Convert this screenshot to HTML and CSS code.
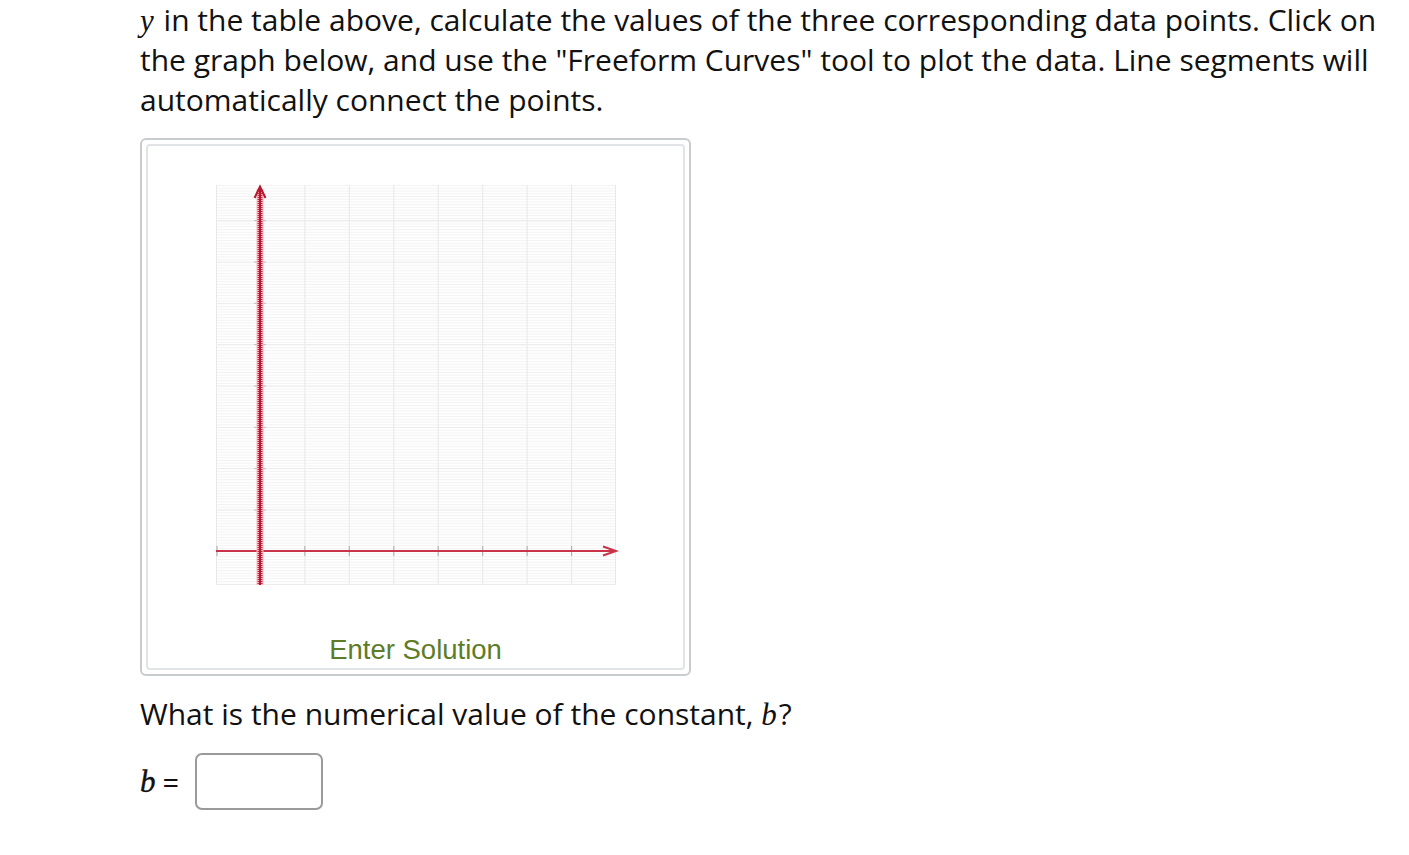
FILE: index.html
```html
<!DOCTYPE html>
<html>
<head>
<meta charset="utf-8">
<link rel="stylesheet" href="styles.css">
</head>
<body>
<div class="page">
  <p class="intro"><span class="math">y</span> in the table above, calculate the values of the three corresponding data points. Click on the graph below, and use the "Freeform Curves" tool to plot the data. Line segments will automatically connect the points.</p>

  <div class="graph-outer">
    <div class="graph-inner">
      <svg class="graph" width="400" height="400" viewBox="0 0 400 400">
        <defs>
          <pattern id="minor" width="400" height="2.75" patternUnits="userSpaceOnUse">
            <rect x="0" y="0" width="400" height="1" fill="#f2f2f2"/>
          </pattern>
          <pattern id="hatch" width="8" height="2" patternUnits="userSpaceOnUse">
            <rect x="0" y="0" width="8" height="1" fill="#c22a40"/>
          </pattern>
        </defs>
        <rect x="0" y="0" width="400" height="400" fill="#ffffff"/>
        <rect x="0" y="0" width="400" height="400" fill="url(#minor)"/>
        <g stroke="#e8e8e8" stroke-width="1">
          <line x1="0.5" y1="0" x2="0.5" y2="400"/>
          <line x1="88.9" y1="0" x2="88.9" y2="400"/>
          <line x1="133.3" y1="0" x2="133.3" y2="400"/>
          <line x1="177.8" y1="0" x2="177.8" y2="400"/>
          <line x1="222.2" y1="0" x2="222.2" y2="400"/>
          <line x1="266.7" y1="0" x2="266.7" y2="400"/>
          <line x1="311.1" y1="0" x2="311.1" y2="400"/>
          <line x1="355.6" y1="0" x2="355.6" y2="400"/>
          <line x1="399.5" y1="0" x2="399.5" y2="400"/>
        </g>
        <g stroke="#ededed" stroke-width="1">
          <line x1="0" y1="35.6" x2="400" y2="35.6"/>
          <line x1="0" y1="77" x2="400" y2="77"/>
          <line x1="0" y1="118.3" x2="400" y2="118.3"/>
          <line x1="0" y1="159.6" x2="400" y2="159.6"/>
          <line x1="0" y1="201" x2="400" y2="201"/>
          <line x1="0" y1="242.3" x2="400" y2="242.3"/>
          <line x1="0" y1="283.6" x2="400" y2="283.6"/>
          <line x1="0" y1="325" x2="400" y2="325"/>
          <line x1="0" y1="399.5" x2="400" y2="399.5"/>
        </g>
        <!-- y axis ticks -->
        <g stroke="#bcbcbc" stroke-width="1">
          <line x1="38" y1="35.6" x2="50" y2="35.6"/>
          <line x1="38" y1="77" x2="50" y2="77"/>
          <line x1="38" y1="118.3" x2="50" y2="118.3"/>
          <line x1="38" y1="159.6" x2="50" y2="159.6"/>
          <line x1="38" y1="201" x2="50" y2="201"/>
          <line x1="38" y1="242.3" x2="50" y2="242.3"/>
          <line x1="38" y1="283.6" x2="50" y2="283.6"/>
          <line x1="38" y1="325" x2="50" y2="325"/>
        </g>
        <!-- x axis ticks -->
        <g stroke="#a8a8a8" stroke-width="1">
          <line x1="1" y1="361" x2="1" y2="371"/>
          <line x1="88.9" y1="361" x2="88.9" y2="371"/>
          <line x1="133.3" y1="361" x2="133.3" y2="371"/>
          <line x1="177.8" y1="361" x2="177.8" y2="371"/>
          <line x1="222.2" y1="361" x2="222.2" y2="371"/>
          <line x1="266.7" y1="361" x2="266.7" y2="371"/>
          <line x1="311.1" y1="361" x2="311.1" y2="371"/>
          <line x1="355.6" y1="361" x2="355.6" y2="371"/>
        </g>
        <!-- x axis -->
        <line x1="0" y1="366" x2="399" y2="366" stroke="#c9344a" stroke-width="2"/>
        <polyline points="387,361.5 400,366 387,370.5" fill="none" stroke="#c9344a" stroke-width="2"/>
        <!-- y axis -->
        <rect x="40.5" y="4" width="7" height="396" fill="#f7bcc4"/>
        <rect x="41.5" y="6" width="5" height="394" fill="url(#hatch)"/>
        <line x1="44" y1="2" x2="44" y2="400" stroke="#b5182e" stroke-width="2"/>
        <polyline points="38.5,13 44,1.5 49.5,13" fill="none" stroke="#b5182e" stroke-width="2"/>
      </svg>
      <div class="enter">Enter Solution</div>
    </div>
  </div>

  <p class="question">What is the numerical value of the constant, <span class="math">b</span>?</p>

  <div class="answer">
    <span class="math">b</span><span class="eq">=</span>
    <span class="input-box"></span>
  </div>
</div>
</body>
</html>
```

FILE: styles.css
```css
html, body {
  margin: 0;
  padding: 0;
  background: #ffffff;
}

body {
  font-family: "Open Sans", "Liberation Sans", sans-serif;
  color: #111111;
}

.page {
  padding-left: 140px;
  width: 1252px;
}

.intro {
  margin: 0;
  font-size: 30px;
  line-height: 40px;
}

.math {
  font-family: "Liberation Serif", "DejaVu Serif", serif;
  font-style: italic;
  font-size: 31px;
  line-height: 1;
  margin-right: 2px;
}

.graph-outer {
  margin-top: 18px;
  box-sizing: border-box;
  width: 551px;
  height: 538px;
  border: 2px solid #c8ccd0;
  border-radius: 6px;
  padding: 4px;
}

.graph-inner {
  height: 100%;
  box-sizing: border-box;
  border: 2px solid #e1e4e7;
  border-radius: 4px;
  display: flex;
  flex-direction: column;
  align-items: center;
  padding-top: 39px;
}

.graph {
  display: block;
  overflow: visible;
}

.enter {
  margin-top: 50px;
  font-family: "Liberation Sans", Arial, sans-serif;
  font-size: 27.5px;
  line-height: 30px;
  color: #5e7c27;
}

.question {
  margin: 18px 0 0 0;
  font-size: 30px;
  line-height: 40px;
}

.answer {
  margin-top: 19px;
  display: flex;
  align-items: center;
  height: 57px;
}

.answer .math {
  font-size: 31px;
  line-height: 40px;
  margin-right: 0;
  -webkit-text-stroke: 0.4px #111111;
}

.eq {
  margin-left: 7px;
  font-size: 29px;
  line-height: 40px;
}

.input-box {
  margin-left: 16px;
  width: 128px;
  height: 57px;
  box-sizing: border-box;
  border: 2px solid #9a9a9a;
  border-radius: 7px;
}
```
